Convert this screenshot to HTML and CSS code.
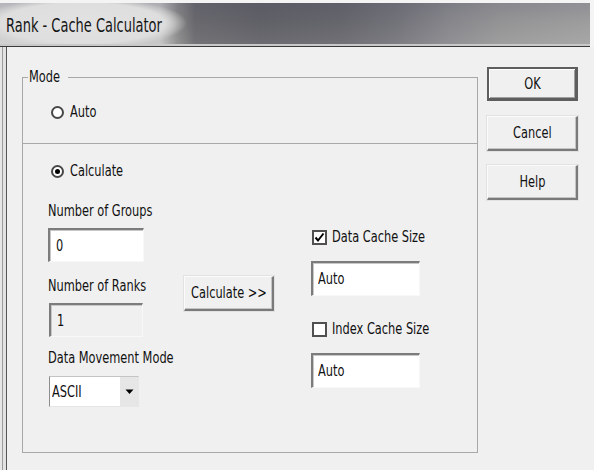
FILE: index.html
```html
<!DOCTYPE html>
<html>
<head>
<meta charset="utf-8">
<title>Rank - Cache Calculator</title>
<link rel="stylesheet" href="styles.css">
</head>
<body>
<div class="window">
  <div class="titlebar"><span class="title">Rank - Cache Calculator</span></div>
  <div class="title-edge"></div>
  <div class="frame">
    <div class="frame-left"></div>
    <div class="client">
      <div class="groupbox">
        <span class="legend"><span class="t">Mode</span></span>
        <div class="sec-auto">
          <div class="radio-row"><span class="radio"></span><span class="t">Auto</span></div>
        </div>
        <div class="sec-calc">
          <div class="radio-row"><span class="radio checked"><span class="dot"></span></span><span class="t">Calculate</span></div>
          <div class="cols">
            <div class="col-left">
              <div class="lbl"><span class="t">Number of Groups</span></div>
              <div class="edit edit-s"><span class="t">0</span></div>
              <div class="lbl lbl-gap"><span class="t">Number of Ranks</span></div>
              <div class="edit edit-s disabled"><span class="t">1</span></div>
              <div class="lbl lbl-gap2"><span class="t">Data Movement Mode</span></div>
              <div class="combo">
                <span class="combo-text"><span class="t">ASCII</span></span>
                <span class="drop"><svg width="9" height="6" viewBox="0 0 9 6"><path d="M0.5 0.5 H8.5 L4.5 5 Z" fill="#000"/></svg></span>
              </div>
            </div>
            <div class="col-mid">
              <div class="btn btn-calc"><span class="t tc">Calculate &gt;&gt;</span></div>
            </div>
            <div class="col-right">
              <div class="check-row first">
                <span class="check"><svg width="11" height="11" viewBox="0 0 11 11"><path d="M1.5 5.5 L4 8.5 L9.5 1.5" fill="none" stroke="#000" stroke-width="2"/></svg></span>
                <span class="t">Data Cache Size</span>
              </div>
              <div class="edit edit-l"><span class="t">Auto</span></div>
              <div class="check-row second">
                <span class="check"></span>
                <span class="t">Index Cache Size</span>
              </div>
              <div class="edit edit-l"><span class="t">Auto</span></div>
            </div>
          </div>
        </div>
      </div>
      <div class="buttons">
        <div class="btn btn-side default"><span class="t tc">OK</span></div>
        <div class="btn btn-side"><span class="t tc">Cancel</span></div>
        <div class="btn btn-side"><span class="t tc">Help</span></div>
      </div>
    </div>
  </div>
</div>
</body>
</html>
```

FILE: styles.css
```css
html, body {
  margin: 0;
  padding: 0;
}
body {
  width: 594px;
  height: 470px;
  overflow: hidden;
  background: #f0f0f0;
  font-family: "DejaVu Sans Condensed", "DejaVu Sans", "Liberation Sans", sans-serif;
  font-size: 16px;
  color: #111;
}
.t {
  display: inline-block;
  white-space: nowrap;
  line-height: 20px;
  transform: scaleX(0.79);
  transform-origin: 0 50%;
}
.tc {
  transform-origin: 50% 50%;
}
.window {
  width: 594px;
  height: 470px;
  padding-top: 3px;
  box-sizing: border-box;
  background: #f4f4f4;
  display: flex;
  flex-direction: column;
}
.titlebar {
  height: 41px;
  width: 590px;
  box-sizing: border-box;
  padding-left: 6px;
  display: flex;
  align-items: center;
  background:
    radial-gradient(ellipse 105px 26px at 82px 20px, rgba(226,226,226,1) 0%, rgba(222,222,222,1) 78%, rgba(210,210,210,0) 100%),
    linear-gradient(to bottom, rgba(60,60,90,0.18) 0%, rgba(60,60,90,0.05) 45%, rgba(255,255,255,0.06) 100%),
    linear-gradient(to right, #cfcfcf 0px, #c4c4c4 160px, #8a8a8a 178px, #6a6a6e 195px, #626268 260px, #67676d 340px, #76767c 400px, #8a8a8e 450px, #989898 500px, #a2a2a2 590px);
}
.title {
  display: inline-block;
  white-space: nowrap;
  font-size: 19px;
  color: #151515;
  padding-top: 3px;
  transform: scaleX(0.76);
  transform-origin: 0 50%;
}
.title-edge {
  height: 2px;
  width: 590px;
  background: #c9c9c9;
  border-bottom: 1px solid #3a3a3a;
}
.frame {
  flex: 1;
  display: flex;
}
.frame-left {
  width: 7px;
  background: linear-gradient(to right, #e6e6e6 0 2px, #9c9c9c 2px 3px, #e2e2e2 3px 6px, #555 6px 7px);
}
.client {
  flex: 1;
  display: flex;
  align-items: flex-start;
  padding-left: 15px;
  background: #f0f0f0;
}
.groupbox {
  position: relative;
  margin-top: 30px;
  width: 456px;
  height: 376px;
  box-sizing: border-box;
  border: 1px solid #a8a8a8;
}
.legend {
  position: absolute;
  left: 5px;
  top: -11px;
  width: 38px;
  padding: 0 1px;
  line-height: 20px;
  background: #f0f0f0;
}
.sec-auto {
  height: 65px;
  border-bottom: 1px solid #a8a8a8;
  padding-left: 28px;
}
.radio-row {
  display: flex;
  align-items: center;
  height: 16px;
  gap: 6px;
}
.sec-auto .radio-row {
  padding-top: 26px;
}
.sec-calc {
  padding-top: 19px;
}
.sec-calc .radio-row {
  padding-left: 28px;
}
.radio {
  width: 13px;
  height: 13px;
  box-sizing: border-box;
  border: 2px solid #474747;
  border-radius: 50%;
  background: #fff;
  display: flex;
  align-items: center;
  justify-content: center;
  flex: none;
}
.dot {
  width: 5px;
  height: 5px;
  border-radius: 50%;
  background: #000;
}
.cols {
  display: flex;
  align-items: flex-start;
  padding-left: 25px;
  margin-top: 22px;
}
.col-left {
  width: 96px;
  display: flex;
  flex-direction: column;
}
.lbl {
  height: 20px;
  white-space: nowrap;
}
.lbl-gap {
  margin-top: 14px;
}
.lbl-gap2 {
  margin-top: 11px;
}
.edit {
  box-sizing: border-box;
  background: #fff;
  border-top: 2px solid #7c7c7c;
  border-left: 2px solid #7c7c7c;
  border-right: 1px solid #f8f8f8;
  border-bottom: 1px solid #f8f8f8;
  box-shadow: inset 1px 1px 0 #c8c8c8;
  padding-left: 6px;
  display: flex;
  align-items: center;
}
.edit-s {
  width: 96px;
  height: 34px;
  margin-top: 7px;
}
.edit.disabled {
  background: #f0f0f0;
  width: 94px;
  margin-left: 1px;
}
.combo {
  margin-top: 8px;
  margin-left: 1px;
  width: 90px;
  height: 31px;
  box-sizing: border-box;
  background: #fff;
  border-top: 1px solid #c4c4c4;
  border-left: 1px solid #8e8e8e;
  border-right: 1px solid #e6e6e6;
  border-bottom: 1px solid #e6e6e6;
  display: flex;
  align-items: stretch;
}
.combo-text {
  flex: 1;
  padding-left: 2px;
  display: flex;
  align-items: center;
}
.drop {
  width: 18px;
  background: #e6e6e6;
  border-left: 1px solid #fff;
  display: flex;
  align-items: center;
  justify-content: center;
}
.col-mid {
  margin-left: 40px;
  padding-top: 75px;
}
.btn {
  box-sizing: border-box;
  background: #f0f0f0;
  border-top: 1px solid #fbfbfb;
  border-left: 1px solid #fbfbfb;
  border-right: 2px solid #7a7a7a;
  border-bottom: 2px solid #7a7a7a;
  box-shadow: inset -1px -1px 0 #c4c4c4, 0 0 0 1px #e2e2e2;
  display: flex;
  align-items: center;
  justify-content: center;
  white-space: nowrap;
  overflow: hidden;
}
.btn-calc {
  width: 90px;
  height: 35px;
}
.col-right {
  margin-left: 37px;
  display: flex;
  flex-direction: column;
}
.check-row {
  display: flex;
  align-items: center;
  height: 20px;
  gap: 5px;
  padding-left: 1px;
}
.check-row.first {
  margin-top: 26px;
}
.check-row.second {
  margin-top: 23px;
}
.check {
  width: 15px;
  height: 15px;
  box-sizing: border-box;
  border: 2px solid #505050;
  background: #fff;
  display: flex;
  align-items: center;
  justify-content: center;
  flex: none;
}
.edit-l {
  width: 109px;
  height: 35px;
  margin-top: 14px;
  padding-left: 5px;
}
.buttons {
  margin-left: 9px;
  margin-top: 20px;
  display: flex;
  flex-direction: column;
  gap: 14px;
}
.btn-side {
  width: 91px;
  height: 35px;
}
.btn-side.default {
  border: 2px solid #5e5e5e;
  border-right-width: 3px;
  border-bottom-width: 3px;
  box-shadow: inset 1px 1px 0 #fff, inset -1px -1px 0 #a0a0a0;
  height: 34px;
  margin-bottom: 1px;
}
```
